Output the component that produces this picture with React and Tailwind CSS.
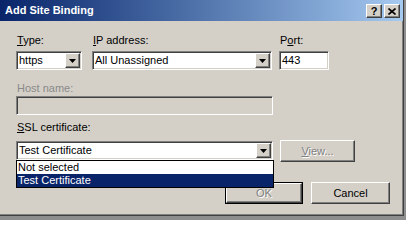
import React from 'react';

/**
 * AddSiteBinding — classic Windows 2000 style "Add Site Binding" dialog
 * with the SSL certificate combo opened.
 */

const raised =
  'border border-t-white border-l-white border-r-[#404040] border-b-[#404040] shadow-[inset_-1px_-1px_0_#808080,inset_1px_1px_0_#d4d0c8] bg-[#d4d0c8]';
const sunken =
  'border border-t-[#808080] border-l-[#808080] border-r-white border-b-white shadow-[inset_1px_1px_0_#404040,inset_-1px_-1px_0_#d4d0c8]';

function Arrow() {
  return (
    <svg viewBox="0 0 7 4" className="h-[4px] w-[7px]" fill="#000">
      <path d="M0 0h7L3.5 4z" />
    </svg>
  );
}

function Combo({ value, className = '' }) {
  return (
    <div className={`flex h-[19px] items-stretch bg-white ${sunken} ${className}`}>
      <span className="flex flex-1 items-center pl-[2px] leading-none">{value}</span>
      <span className={`m-[1px] flex w-[15px] items-center justify-center ${raised}`}>
        <Arrow />
      </span>
    </div>
  );
}

function DisabledText({ children }) {
  return <span className="text-[#808080] [text-shadow:1px_1px_0_#fff]">{children}</span>;
}

export default function App() {
  return (
    <div className="h-[220px] w-[406px] overflow-hidden bg-[#8e8e8e] font-['Liberation_Sans',Arial,sans-serif] text-[11px] leading-[13px] text-black">
      <div className="flex h-[216px] w-[404px] flex-col border-r border-b border-[#404040] bg-[#d4d0c8] shadow-[inset_-1px_-1px_0_#808080]">
        {/* Title bar */}
        <div className="flex h-[21px] shrink-0 items-center justify-between bg-linear-to-r from-[#0a246a] to-[#a6caf0] pr-[3px] pl-[5px]">
          <span className="text-[11px] font-bold text-white">Add Site Binding</span>
          <div className="flex gap-[2px] pt-[1px]">
            <span className={`flex h-[14px] w-[16px] items-center justify-center text-[11px] font-bold leading-none ${raised}`}>
              ?
            </span>
            <span className={`flex h-[14px] w-[16px] items-center justify-center ${raised}`}>
              <svg viewBox="0 0 8 7" className="h-[7px] w-[8px]" stroke="#000" strokeWidth="1.6">
                <path d="M0.5 0.5l7 6M7.5 0.5l-7 6" />
              </svg>
            </span>
          </div>
        </div>

        {/* Body */}
        <div className="flex flex-col pt-[13px] pl-[16px]">
          <div className="flex">
            <div className="flex w-[66px] flex-col">
              <label className="pl-[1px]">
                <span className="underline">T</span>ype:
              </label>
              <Combo value="https" className="mt-[4px]" />
            </div>
            <div className="ml-[10px] flex w-[180px] flex-col">
              <label className="pl-[1px]">
                <span className="underline">I</span>P address:
              </label>
              <Combo value="All Unassigned" className="mt-[4px]" />
            </div>
            <div className="ml-[7px] flex w-[50px] flex-col">
              <label className="pl-[1px]">
                P<span className="underline">o</span>rt:
              </label>
              <div className={`mt-[4px] flex h-[19px] items-center bg-white pl-[2px] ${sunken}`}>443</div>
            </div>
          </div>

          <label className="mt-[12px] pl-[1px] text-[#8a8a8a]">Host name:</label>
          <div className={`mt-[1px] h-[19px] w-[257px] bg-[#d4d0c8] ${sunken}`} />

          <label className="mt-[6px] pl-[1px]">
            <span className="underline">S</span>SL certificate:
          </label>
          <div className="mt-[6px] flex items-start">
            <div className="relative z-10 mt-[1px] w-[257px]">
              <Combo value="Test Certificate" />
              <ul className="absolute top-full left-0 w-[258px] border border-black bg-white">
                <li className="h-[13px] pl-[1px] leading-[13px]">Not selected</li>
                <li className="h-[13px] bg-[#0a246a] pl-[1px] leading-[13px] text-white">Test Certificate</li>
              </ul>
            </div>
            <button type="button" className={`ml-[7px] flex h-[22px] w-[75px] items-center justify-center ${raised}`}>
              <DisabledText>
                <span className="underline">V</span>iew...
              </DisabledText>
            </button>
          </div>

          <div className="mt-[20px] flex justify-end gap-[8px] pr-[13px]">
            <button type="button" className="h-[22px] w-[78px] border border-black p-0">
              <span className={`flex h-full w-full items-center justify-center ${raised}`}>
                <DisabledText>OK</DisabledText>
              </span>
            </button>
            <button type="button" className={`flex h-[22px] w-[79px] items-center justify-center ${raised}`}>
              Cancel
            </button>
          </div>
        </div>
      </div>
    </div>
  );
}
